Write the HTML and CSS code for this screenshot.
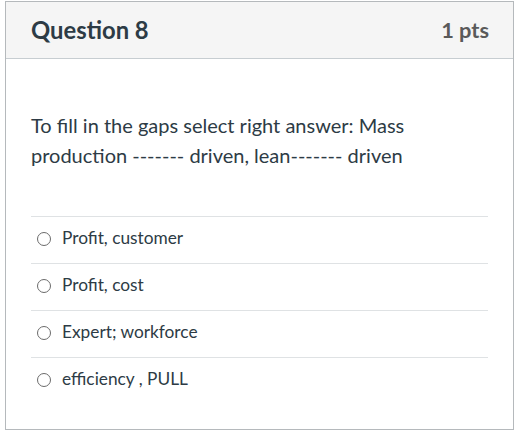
FILE: index.html
```html
<!DOCTYPE html>
<html>
<head>
<meta charset="utf-8">
<link rel="stylesheet" href="styles.css">
</head>
<body>
<div class="card">
  <div class="header">
    <h2 class="title">Question 8</h2>
    <span class="points">1 pts</span>
  </div>
  <div class="content">
    <p class="question">To fill in the gaps select right answer: Mass production ------- driven, lean------- driven</p>
    <div class="answers">
      <label class="answer"><span class="radio"></span><span class="label">Profit, customer</span></label>
      <label class="answer"><span class="radio"></span><span class="label">Profit, cost</span></label>
      <label class="answer"><span class="radio"></span><span class="label">Expert; workforce</span></label>
      <label class="answer"><span class="radio"></span><span class="label">efficiency , PULL</span></label>
    </div>
  </div>
</div>
</body>
</html>
```
FILE: styles.css
```css
html, body { margin: 0; padding: 0; background: #fff; }
body { font-family: Lato, "Open Sans", sans-serif; color: #2d3b45; }
.card {
  box-sizing: border-box;
  margin: 1px 1px 0 5px;
  width: 509px;
  height: 429px;
  border: 1px solid #b5b9bc;
}
.header {
  box-sizing: border-box;
  height: 57px;
  background: #f5f5f5;
  border-bottom: 1px solid #c7cdd1;
  display: flex;
  align-items: center;
  justify-content: space-between;
  padding: 0 24px 0 25px;
}
.title { margin: 0; font-size: 23.8px; font-weight: 700; color: #2d3b45; margin-top: -1px; }
.points { font-size: 21.8px; font-weight: 700; color: #5a5a5a; margin-top: -1px; }
.content { padding: 51px 25px 0 25px; }
.question { margin: 0 0 46px 0; font-size: 20px; line-height: 30px; }
.answer {
  box-sizing: border-box;
  display: flex;
  align-items: center;
  height: 47px;
  border-top: 1px solid #dfe2e4;
  padding: 0 0 0 6px;
  font-size: 17.3px;
}
.radio {
  box-sizing: border-box;
  width: 14px;
  height: 14px;
  border: 1.5px solid #6b6b6b;
  border-radius: 50%;
  margin-right: 11px;
  margin-top: -3px;
}
.label { line-height: 20px; margin-top: -5px; }
```
